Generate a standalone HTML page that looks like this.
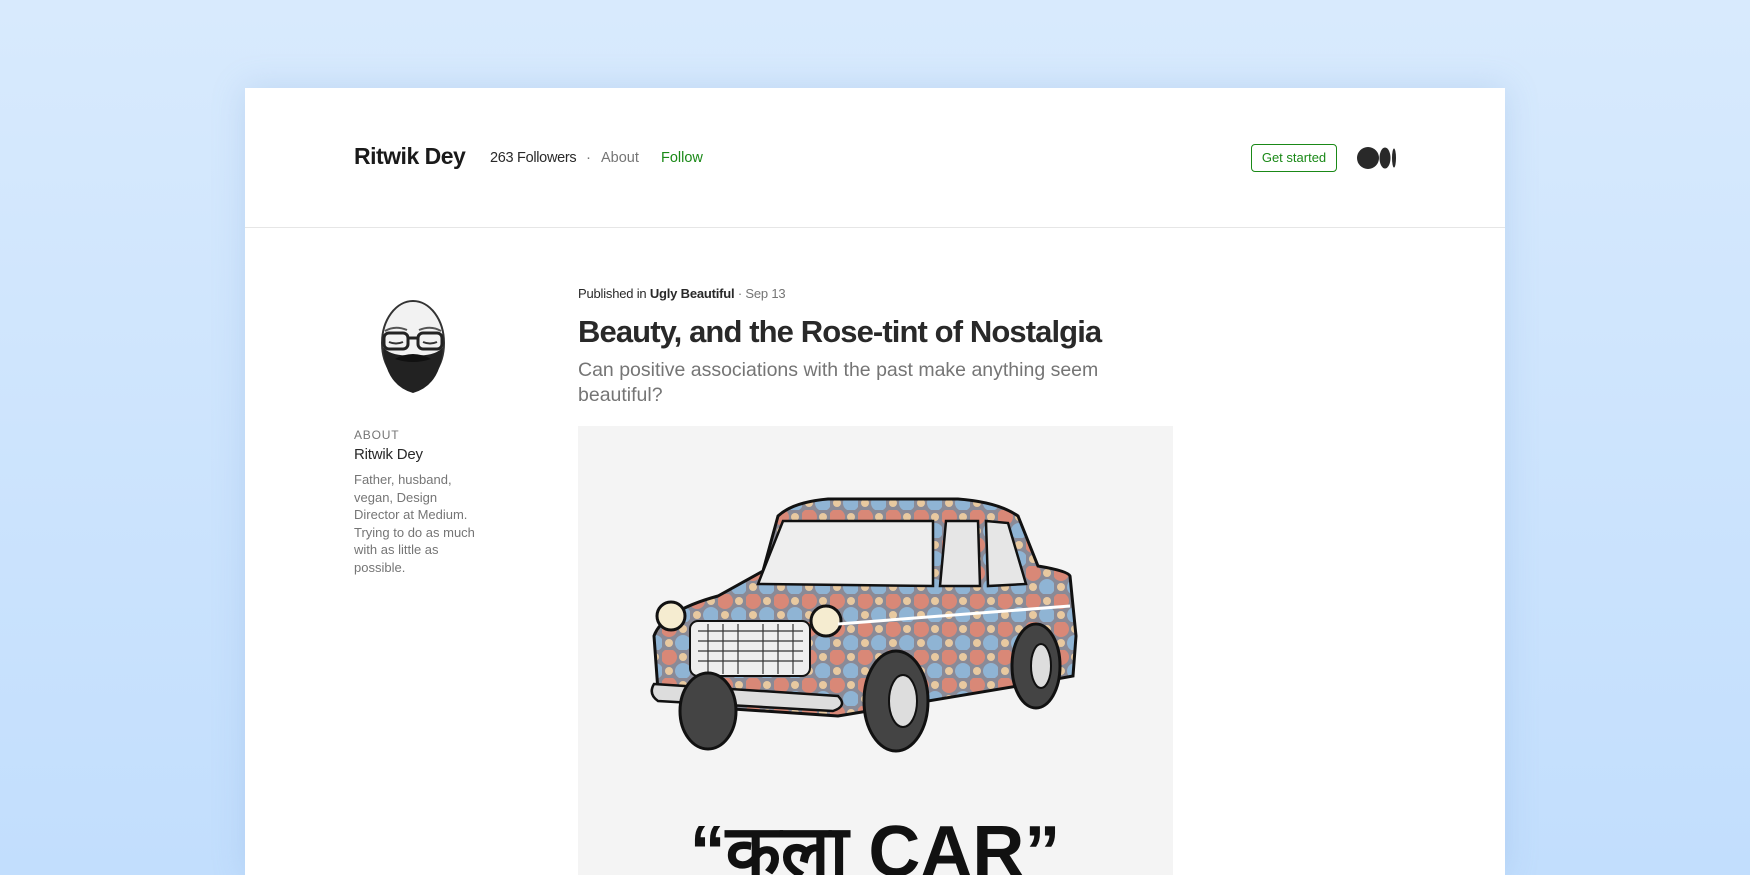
<!DOCTYPE html>
<html><head><meta charset="utf-8"><style>
*{margin:0;padding:0;box-sizing:border-box}
html,body{width:1750px;height:875px;overflow:hidden}
body{background:linear-gradient(180deg,#d8eafd 0%,#c2defd 100%);font-family:"Liberation Sans",sans-serif;position:relative}
.card{position:absolute;left:245px;top:88px;width:1260px;height:787px;background:#fff;box-shadow:0 0 30px rgba(120,160,210,.25);overflow:hidden}
.abs{position:absolute;white-space:nowrap}
.hr{position:absolute;left:0;right:0;top:139px;height:1px;background:#e6e6e6}
</style></head><body>
<div class="card">
  <div class="abs" style="left:109px;top:55px;font-size:23px;font-weight:bold;color:#1a1a1a;letter-spacing:-0.5px">Ritwik Dey</div>
  <div class="abs" style="left:245px;top:62px;font-size:14.5px;color:#292929;letter-spacing:-0.3px">263 Followers</div>
  <div class="abs" style="left:341px;top:61px;font-size:15px;color:#757575">·</div>
  <div class="abs" style="left:356px;top:62px;font-size:14.5px;color:#757575">About</div>
  <div class="abs" style="left:416px;top:62px;font-size:14.5px;color:#1a8917">Follow</div>
  <div class="abs" style="left:1006px;top:56px;width:86px;height:28px;border:1px solid #1a8917;border-radius:4px;color:#1a8917;font-size:13px;line-height:26px;text-align:center">Get started</div>
  <svg class="abs" style="left:1112px;top:58px" width="40" height="24" viewBox="0 0 40 24"><ellipse cx="11" cy="12" rx="11" ry="11" fill="#292929"/><ellipse cx="28" cy="12" rx="5.5" ry="10.5" fill="#292929"/><ellipse cx="37" cy="12" rx="2" ry="9.5" fill="#292929"/></svg>
  <div class="hr"></div>

  <svg class="abs" style="left:110px;top:197px" width="115" height="115" viewBox="0 0 115 115">
    <rect width="115" height="115" fill="#fff"/>
    <ellipse cx="58" cy="58" rx="31" ry="42" fill="#f2f2f2" stroke="#333" stroke-width="2"/>
    <path d="M28 62 Q30 100 58 108 Q86 100 88 62 Q80 72 58 70 Q36 72 28 62Z" fill="#222"/>
    <path d="M40 74 Q58 64 76 74 Q58 80 40 74Z" fill="#111"/>
    <rect x="29" y="48" width="24" height="16" rx="5" fill="none" stroke="#222" stroke-width="3"/>
    <rect x="63" y="48" width="24" height="16" rx="5" fill="none" stroke="#222" stroke-width="3"/>
    <line x1="53" y1="53" x2="63" y2="53" stroke="#222" stroke-width="3"/>
    <path d="M34 57 Q41 60 48 57 M68 57 Q75 60 82 57" stroke="#333" stroke-width="2" fill="none"/>
    <path d="M30 46 Q40 40 52 45 M64 45 Q76 40 86 46" stroke="#555" stroke-width="2" fill="none"/>
  </svg>
  <div class="abs" style="left:109px;top:340px;font-size:12px;color:#757575;letter-spacing:0.8px">ABOUT</div>
  <div class="abs" style="left:109px;top:358px;font-size:15px;color:#292929;letter-spacing:-0.2px">Ritwik Dey</div>
  <div class="abs" style="left:109px;top:383px;font-size:13px;line-height:17.5px;color:#757575;white-space:normal;width:130px">Father, husband,<br>vegan, Design<br>Director at Medium.<br>Trying to do as much<br>with as little as<br>possible.</div>

  <div class="abs" style="left:333px;top:198px;font-size:13px;color:#292929;letter-spacing:-0.2px">Published in <span style="color:#292929;font-weight:bold">Ugly Beautiful</span> <span style="color:#757575">· Sep 13</span></div>
  <div class="abs" style="left:333px;top:226px;font-size:31px;font-weight:bold;color:#292929;letter-spacing:-0.9px">Beauty, and the Rose-tint of Nostalgia</div>
  <div class="abs" style="left:333px;top:270px;font-size:19.5px;line-height:24.5px;color:#757575;white-space:normal;width:560px">Can positive associations with the past make anything seem beautiful?</div>

  <svg class="abs" style="left:333px;top:338px" width="595" height="470" viewBox="0 0 595 470">
    <defs>
      <pattern id="pt" width="28" height="28" patternUnits="userSpaceOnUse">
        <rect width="28" height="28" fill="#8a8a96"/>
        <circle cx="7" cy="7" r="8" fill="#d98877"/>
        <circle cx="21" cy="21" r="8" fill="#8fb4d4"/>
        <circle cx="21" cy="7" r="4" fill="#e8c9a0"/>
        <circle cx="7" cy="21" r="4" fill="#e8c9a0"/>
      </pattern>
    </defs>
    <rect width="595" height="470" fill="#f4f4f4"/>
    <path d="M200 90 Q215 76 250 73 L380 73 Q420 76 440 90 L460 140 Q490 145 492 150 L498 210 L495 250 L440 260 L260 290 L110 280 L80 265 L76 210 Q85 185 140 170 L185 145 Z" fill="url(#pt)" stroke="#111" stroke-width="3"/>
    <path d="M205 95 L355 95 L355 160 L180 158 Z" fill="#eeeeee" stroke="#111" stroke-width="2.5"/>
    <path d="M368 95 L400 95 L402 160 L362 160 Z" fill="#e6e6e6" stroke="#111" stroke-width="2.5"/>
    <path d="M408 95 L430 97 L448 158 L410 160 Z" fill="#e6e6e6" stroke="#111" stroke-width="2.5"/>
    <rect x="112" y="195" width="120" height="55" rx="8" fill="#eee" stroke="#111" stroke-width="2"/>
    <path d="M120 205h105M120 215h105M120 225h105M120 235h105M130 198v50M145 198v50M160 198v50M185 198v50M200 198v50M215 198v50" stroke="#333" stroke-width="1.2"/>
    <circle cx="93" cy="190" r="14" fill="#f5ecd0" stroke="#111" stroke-width="3"/>
    <circle cx="248" cy="195" r="15" fill="#f5ecd0" stroke="#111" stroke-width="3"/>
    <path d="M76 258 L260 270 Q270 280 255 285 L80 275 Q70 268 76 258Z" fill="#ddd" stroke="#111" stroke-width="2.5"/>
    <path d="M260 198 L492 180" stroke="#fff" stroke-width="3"/>
    <ellipse cx="130" cy="285" rx="28" ry="38" fill="#444" stroke="#111" stroke-width="3"/>
    <ellipse cx="318" cy="275" rx="32" ry="50" fill="#444" stroke="#111" stroke-width="3"/>
    <ellipse cx="325" cy="275" rx="14" ry="26" fill="#ddd" stroke="#111" stroke-width="2"/>
    <ellipse cx="458" cy="240" rx="24" ry="42" fill="#444" stroke="#111" stroke-width="3"/>
    <ellipse cx="463" cy="240" rx="10" ry="22" fill="#ddd" stroke="#111" stroke-width="2"/>
    <text x="297" y="450" text-anchor="middle" font-family="'Liberation Sans',sans-serif" font-weight="bold" font-size="72" fill="#111">“कला CAR”</text>
  </svg>
</div>
</body></html>
